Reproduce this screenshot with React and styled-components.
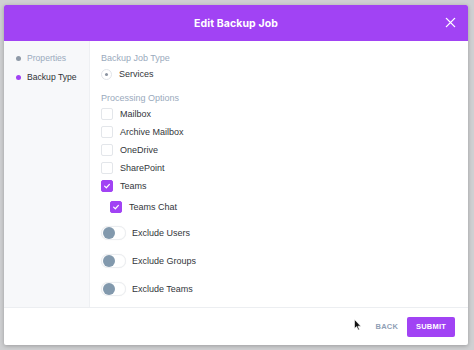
import styled, { createGlobalStyle } from "styled-components";

const purple = "#a143f4";

const Global = createGlobalStyle`
  html, body {
    margin: 0;
    padding: 0;
    background: #cfd0d2;
  }
  body {
    font-family: "Liberation Sans", Arial, sans-serif;
    -webkit-font-smoothing: antialiased;
  }
`;

const Backdrop = styled.div`
  position: relative;
  width: 474px;
  height: 350px;
  box-sizing: border-box;
  padding: 5px 6px 5px 4px;
  background: #cfd0d2;
  overflow: hidden;
`;

const Modal = styled.div`
  display: flex;
  flex-direction: column;
  width: 464px;
  height: 340px;
  background: #fff;
  border-radius: 2px;
  box-shadow: 0 1px 4px rgba(0, 0, 0, 0.25);
  overflow: hidden;
`;

const Header = styled.div`
  position: relative;
  display: flex;
  align-items: center;
  justify-content: center;
  height: 36px;
  flex-shrink: 0;
  background: ${purple};
`;

const Title = styled.h1`
  margin: 0;
  color: #fff;
  font-family: Inter, "Open Sans", sans-serif;
  font-size: 10.5px;
  font-weight: 700;
  letter-spacing: 0.1px;
`;

const CloseButton = styled.button`
  position: absolute;
  right: 12px;
  top: 12px;
  display: flex;
  padding: 0;
  border: none;
  background: none;
  cursor: pointer;
`;

const Body = styled.div`
  display: flex;
  flex: 1;
  min-height: 0;
`;

const Sidebar = styled.nav`
  display: flex;
  flex-direction: column;
  gap: 5px;
  width: 86px;
  flex-shrink: 0;
  padding-top: 10px;
  box-sizing: border-box;
  background: #f7f8fa;
  border-right: 1px solid #eef0f3;
`;

const NavItem = styled.div`
  display: flex;
  align-items: center;
  gap: 6px;
  height: 14px;
  padding-left: 12px;
  font-size: 8.6px;
  color: ${(p) => (p.$active ? "#2f3237" : "#9aaabd")};

  &::before {
    content: "";
    width: 5px;
    height: 5px;
    border-radius: 50%;
    background: ${(p) => (p.$active ? purple : "#8f9aa8")};
  }
`;

const Content = styled.section`
  display: flex;
  flex-direction: column;
  flex: 1;
  padding: 10px 12px 0 11px;
`;

const SectionLabel = styled.div`
  height: 14px;
  line-height: 14px;
  font-size: 9px;
  color: #9aaabd;
  margin-top: ${(p) => p.$gap || 0}px;
`;

const Row = styled.label`
  display: flex;
  align-items: center;
  gap: 7px;
  height: 18px;
  padding-left: ${(p) => (p.$indent ? 9 : 0)}px;
  margin-top: ${(p) => (p.$indent ? 3 : 0)}px;
  font-size: 9px;
  color: #33363b;
`;

const Radio = styled.span`
  display: flex;
  align-items: center;
  justify-content: center;
  width: 11px;
  height: 11px;
  border-radius: 50%;
  border: 1px solid #e1e4e9;
  box-sizing: border-box;

  &::after {
    content: "";
    width: 3px;
    height: 3px;
    border-radius: 50%;
    background: #8a93a0;
  }
`;

const Box = styled.span`
  display: flex;
  align-items: center;
  justify-content: center;
  width: 12px;
  height: 12px;
  box-sizing: border-box;
  border-radius: 2px;
  border: 1px solid ${(p) => (p.$checked ? purple : "#e3e6ea")};
  background: ${(p) => (p.$checked ? purple : "#fff")};
`;

const ToggleRow = styled.label`
  display: flex;
  align-items: center;
  gap: 6px;
  height: 28px;
  margin-top: ${(p) => (p.$first ? 3 : 0)}px;
  font-size: 9px;
  color: #33363b;
`;

const Track = styled.span`
  display: flex;
  align-items: center;
  width: 25px;
  height: 14px;
  padding: 0 1px;
  box-sizing: border-box;
  border-radius: 7px;
  background: #fff;
  border: 1px solid #eceef1;
  box-shadow: 0 0 1px rgba(0, 0, 0, 0.08);

  &::before {
    content: "";
    width: 12px;
    height: 12px;
    border-radius: 50%;
    background: #8299ad;
  }
`;

const Footer = styled.div`
  display: flex;
  align-items: center;
  justify-content: flex-end;
  gap: 5px;
  height: 37px;
  flex-shrink: 0;
  padding-right: 13px;
  border-top: 1px solid #eceef1;
`;

const Button = styled.button`
  height: 20px;
  padding: 0 ${(p) => (p.$primary ? 9 : 4)}px;
  border: none;
  border-radius: 2px;
  background: ${(p) => (p.$primary ? purple : "transparent")};
  color: ${(p) => (p.$primary ? "#fff" : "#8fa0b5")};
  font-family: "Liberation Sans", Arial, sans-serif;
  font-size: 7.5px;
  font-weight: 700;
  letter-spacing: 0.2px;
  cursor: pointer;
`;

const Cursor = styled.svg`
  position: absolute;
  left: 354px;
  top: 319px;
`;

const Check = () => (
  <svg width="8" height="8" viewBox="0 0 10 10">
    <path d="M2 5.2 L4.2 7.2 L8 3" fill="none" stroke="#fff" strokeWidth="1.5" strokeLinecap="round" strokeLinejoin="round" />
  </svg>
);

const options = [
  { label: "Mailbox" },
  { label: "Archive Mailbox" },
  { label: "OneDrive" },
  { label: "SharePoint" },
  { label: "Teams", checked: true },
  { label: "Teams Chat", checked: true, indent: true },
];

const toggles = ["Exclude Users", "Exclude Groups", "Exclude Teams"];

export default function App() {
  return (
    <Backdrop>
      <Global />
      <Modal>
        <Header>
          <Title>Edit Backup Job</Title>
          <CloseButton aria-label="close">
            <svg width="11" height="11" viewBox="0 0 12 12">
              <path d="M1.5 1.5 L10.5 10.5 M10.5 1.5 L1.5 10.5" stroke="#fff" strokeWidth="1.5" strokeLinecap="round" />
            </svg>
          </CloseButton>
        </Header>

        <Body>
          <Sidebar>
            <NavItem>Properties</NavItem>
            <NavItem $active>Backup Type</NavItem>
          </Sidebar>

          <Content>
            <SectionLabel>Backup Job Type</SectionLabel>
            <Row>
              <Radio />
              Services
            </Row>

            <SectionLabel $gap={8}>Processing Options</SectionLabel>
            {options.map((o) => (
              <Row key={o.label} $indent={o.indent}>
                <Box $checked={o.checked}>{o.checked && <Check />}</Box>
                {o.label}
              </Row>
            ))}

            {toggles.map((t, i) => (
              <ToggleRow key={t} $first={i === 0}>
                <Track />
                {t}
              </ToggleRow>
            ))}
          </Content>
        </Body>

        <Footer>
          <Button>BACK</Button>
          <Button $primary>SUBMIT</Button>
        </Footer>
      </Modal>

      <Cursor width="8" height="12" viewBox="0 0 8 12">
        <path d="M0.5 0.5 L0.5 9.5 L2.6 7.6 L4.2 11 L5.4 10.4 L3.9 7.2 L6.8 7.2 Z" fill="#111" stroke="#fff" strokeWidth="0.6" />
      </Cursor>
    </Backdrop>
  );
}
